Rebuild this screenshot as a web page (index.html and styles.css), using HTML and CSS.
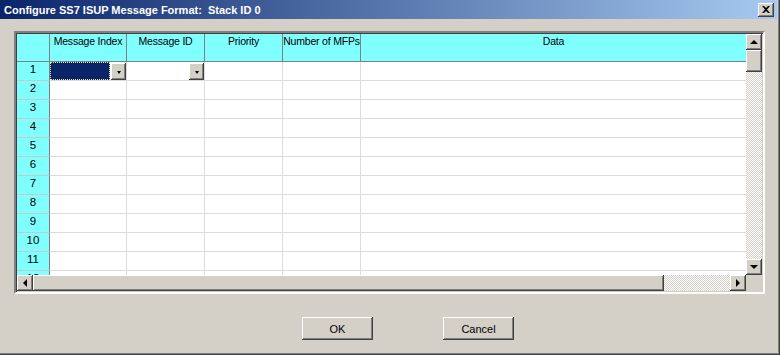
FILE: index.html
```html
<!DOCTYPE html>
<html>
<head>
<meta charset="utf-8">
<link rel="stylesheet" href="styles.css">
</head>
<body>
<div class="window">
  <div class="titlebar">
    <span class="title">Configure SS7 ISUP Message Format:&nbsp; Stack ID 0</span>
    <span class="close"><svg width="8" height="7" viewBox="0 0 8 7"><path d="M0 0h2l2 2 2-2h2L5 3.5 8 7H6L4 5 2 7H0l3-3.5z" fill="#000"/></svg></span>
  </div>
  <div class="gridbox">
    <div class="cells">
      <div class="row head">
        <div class="c rh"></div>
        <div class="c">Message Index</div>
        <div class="c">Message ID</div>
        <div class="c">Priority</div>
        <div class="c">Number of MFPs</div>
        <div class="c last">Data</div>
      </div>
      <div class="row">
        <div class="c rh">1</div>
        <div class="c combo"><span class="sel"></span><span class="dd"><i></i></span></div>
        <div class="c combo"><span class="blank"></span><span class="dd"><i></i></span></div>
        <div class="c"></div><div class="c"></div><div class="c last"></div>
      </div>
      <div class="row"><div class="c rh">2</div><div class="c"></div><div class="c"></div><div class="c"></div><div class="c"></div><div class="c last"></div></div>
      <div class="row"><div class="c rh">3</div><div class="c"></div><div class="c"></div><div class="c"></div><div class="c"></div><div class="c last"></div></div>
      <div class="row"><div class="c rh">4</div><div class="c"></div><div class="c"></div><div class="c"></div><div class="c"></div><div class="c last"></div></div>
      <div class="row"><div class="c rh">5</div><div class="c"></div><div class="c"></div><div class="c"></div><div class="c"></div><div class="c last"></div></div>
      <div class="row"><div class="c rh">6</div><div class="c"></div><div class="c"></div><div class="c"></div><div class="c"></div><div class="c last"></div></div>
      <div class="row"><div class="c rh">7</div><div class="c"></div><div class="c"></div><div class="c"></div><div class="c"></div><div class="c last"></div></div>
      <div class="row"><div class="c rh">8</div><div class="c"></div><div class="c"></div><div class="c"></div><div class="c"></div><div class="c last"></div></div>
      <div class="row"><div class="c rh">9</div><div class="c"></div><div class="c"></div><div class="c"></div><div class="c"></div><div class="c last"></div></div>
      <div class="row"><div class="c rh">10</div><div class="c"></div><div class="c"></div><div class="c"></div><div class="c"></div><div class="c last"></div></div>
      <div class="row"><div class="c rh">11</div><div class="c"></div><div class="c"></div><div class="c"></div><div class="c"></div><div class="c last"></div></div>
      <div class="row"><div class="c rh">12</div><div class="c"></div><div class="c"></div><div class="c"></div><div class="c"></div><div class="c last"></div></div>
    </div>
    <div class="vscroll">
      <div class="btn"><i class="up"></i></div>
      <div class="thumb"></div>
      <div class="track"></div>
      <div class="btn"><i class="down"></i></div>
    </div>
    <div class="hscroll">
      <div class="btn"><i class="left"></i></div>
      <div class="hthumb"></div>
      <div class="track"></div>
      <div class="btn"><i class="right"></i></div>
    </div>
    <div class="corner"></div>
  </div>
  <div class="buttons">
    <button class="pb">OK</button>
    <button class="pb">Cancel</button>
  </div>
</div>
</body>
</html>
```
FILE: styles.css
```css
* { box-sizing: border-box; }
html, body { margin: 0; padding: 0; }
body {
  width: 780px; height: 355px; overflow: hidden;
  background: #d4d0c8;
  font-family: "Liberation Sans", Arial, sans-serif;
  font-size: 11px; color: #000;
}
.window {
  width: 780px; height: 355px;
  padding: 0 3px 3px 0;
  box-shadow: inset -1px -1px #404040, inset -2px -2px #808080;
}
.titlebar {
  height: 19px;
  background: linear-gradient(to right, #0a246a, #a6caf0);
  display: flex; align-items: center; justify-content: space-between;
  padding: 0 3px 0 4px;
}
.title {
  color: #fff; font-weight: bold; font-size: 11px;
  font-family: "Liberation Sans", Arial, sans-serif;
  white-space: nowrap;
}
.close {
  width: 16px; height: 14px;
  background: #d4d0c8;
  box-shadow: inset -1px -1px #404040, inset 1px 1px #fff, inset -2px -2px #808080;
  display: flex; align-items: center; justify-content: center;
  padding-bottom: 1px;
}
.close svg { display: block; }
.gridbox {
  margin: 12px 0 0 14px;
  width: 751px; height: 263px;
  border-style: solid; border-width: 2px;
  border-color: #808080 #fff #fff #808080;
  box-shadow: inset 1px 1px #404040, inset -1px -1px #d4d0c8;
  padding: 1px 1px 1px 1px;
  display: grid;
  grid-template-columns: 1fr 16px;
  grid-template-rows: 1fr 16px;
  background: #fff;
}
.cells { overflow: hidden; background: #fff; }
.row {
  display: grid;
  grid-template-columns: 33px 77px 78px 78px 78px 1fr;
  height: 19px;
}
.c {
  border-right: 1px solid #dcdcdc;
  border-bottom: 1px solid #dcdcdc;
  text-align: center;
  line-height: 16px;
  white-space: nowrap; overflow: hidden;
}
.c.last { border-right: 0; }
.c.rh {
  background: #80ffff;
  border-right-color: #808080;
  border-bottom-color: #c8c8c8;
  font-size: 11.5px;
  line-height: 15px;
}
.row.head { height: 28px; }
.row.head .c {
  background: #80ffff;
  border-right-color: #808080;
  border-bottom-color: #808080;
  font-size: 10.5px;
  line-height: 14px;
  padding-top: 0;
  letter-spacing: -0.2px;
}
.combo { display: flex; padding-top: 1px; }
.combo .sel {
  width: 60px; height: 18px; margin-top: -1px;
  background: #0a246a;
  border: 1px dotted #f0e8a0;
}
.combo .blank { width: 62px; }
.dd {
  width: 15px; height: 17px;
  margin-left: 1px;
  background: #d4d0c8;
  box-shadow: inset -1px -1px #404040, inset 1px 1px #fff, inset -2px -2px #808080;
  display: flex; align-items: center; justify-content: center;
  padding-top: 1px;
}
.combo .blank + .dd { margin-left: 0; }
.dd i {
  width: 0; height: 0;
  border-left: 2.5px solid transparent;
  border-right: 2.5px solid transparent;
  border-top: 3px solid #000;
}
.vscroll {
  display: flex; flex-direction: column;
}
.hscroll { display: flex; }
.btn {
  width: 16px; height: 16px; flex: none;
  background: #d4d0c8;
  box-shadow: inset -1px -1px #404040, inset 1px 1px #fff, inset -2px -2px #808080;
  display: flex; align-items: center; justify-content: center;
}
.thumb {
  height: 22px; flex: none;
  background: #d4d0c8;
  box-shadow: inset -1px -1px #404040, inset 1px 1px #fff, inset -2px -2px #808080;
}
.hthumb {
  width: 631px; flex: none;
  background: #d4d0c8;
  box-shadow: inset -1px -1px #404040, inset 1px 1px #fff, inset -2px -2px #808080;
}
.track {
  flex: 1;
  background: repeating-conic-gradient(#d4d0c8 0 25%, #fff 0 50%) 0 0 / 2px 2px;
}
.corner { background: #d4d0c8; }
.btn i { width: 0; height: 0; display: block; }
.btn i.up { border-left: 4px solid transparent; border-right: 4px solid transparent; border-bottom: 4px solid #000; margin-top: -1px; }
.btn i.down { border-left: 4px solid transparent; border-right: 4px solid transparent; border-top: 4px solid #000; }
.btn i.left { border-top: 4px solid transparent; border-bottom: 4px solid transparent; border-right: 4px solid #000; margin-left: -1px; }
.btn i.right { border-top: 4px solid transparent; border-bottom: 4px solid transparent; border-left: 4px solid #000; }
.buttons {
  display: flex; gap: 70px;
  padding: 23px 0 0 302px;
}
.pb {
  width: 71px; height: 23px;
  background: #d4d0c8;
  border: 0;
  box-shadow: inset -1px -1px #404040, inset 1px 1px #fff, inset -2px -2px #808080;
  font-family: "Liberation Sans", Arial, sans-serif;
  font-size: 11px; color: #000;
  padding: 0;
}
```
